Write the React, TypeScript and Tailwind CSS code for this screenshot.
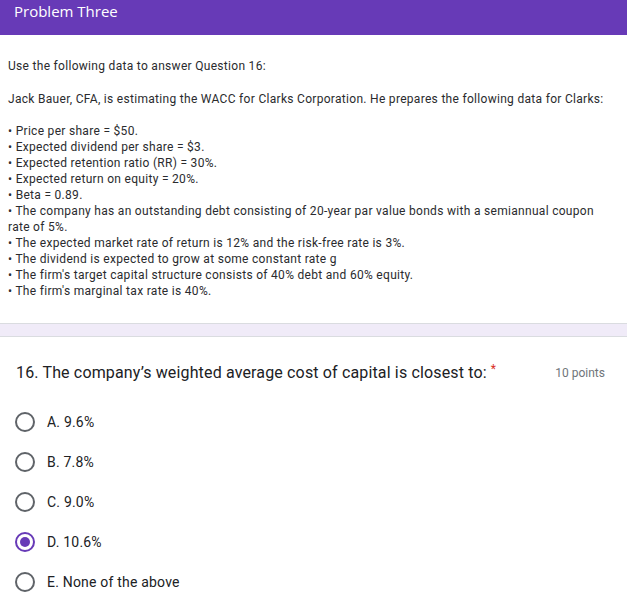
import React from "react";

const bullets = [
  "Price per share = $50.",
  "Expected dividend per share = $3.",
  "Expected retention ratio (RR) = 30%.",
  "Expected return on equity = 20%.",
  "Beta = 0.89.",
  "The company has an outstanding debt consisting of 20-year par value bonds with a semiannual coupon rate of 5%.",
  "The expected market rate of return is 12% and the risk-free rate is 3%.",
  "The dividend is expected to grow at some constant rate g",
  "The firm's target capital structure consists of 40% debt and 60% equity.",
  "The firm's marginal tax rate is 40%.",
];

const options = ["A. 9.6%", "B. 7.8%", "C. 9.0%", "D. 10.6%", "E. None of the above"];

function Radio({ checked }: { checked: boolean }) {
  return checked ? (
    <span className="flex h-[20px] w-[20px] items-center justify-center rounded-full border-2 border-[#673ab7]">
      <span className="h-[10px] w-[10px] rounded-full bg-[#673ab7]" />
    </span>
  ) : (
    <span className="block h-[20px] w-[20px] rounded-full border-2 border-[#5f6368]" />
  );
}

export default function App() {
  return (
    <div className="w-[627px] h-[615px] overflow-hidden bg-white text-[#202124]" style={{ fontFamily: "Roboto, 'Liberation Sans', sans-serif" }}>
      <div className="h-[35px] bg-[#673ab7] pl-[14px] pt-[1px]">
        <div className="text-[15px] leading-[20px] text-white" style={{ fontFamily: "'Open Sans', Roboto, sans-serif" }}>
          Problem Three
        </div>
      </div>
      <div className="pl-[8px] pr-[22px] pt-[23px] pb-[24px] text-[12px] leading-[16px] tracking-[0.3px] text-[#2a2b2e]">
        <p>Use the following data to answer Question 16:</p>
        <p className="mt-[17px]">
          Jack Bauer, CFA, is estimating the WACC for Clarks Corporation. He prepares the following data for Clarks:
        </p>
        <div className="mt-[16px]">
          {bullets.map((b) => (
            <p key={b}>• {b}</p>
          ))}
        </div>
      </div>
      <div className="h-[14px] border-y border-[#dadce0] bg-[#f0ebf8]" />
      <div>
        <div className="flex items-start justify-between pl-[16px] pr-[22px] pt-[25px]">
          <div className="text-[16px] leading-[22px] tracking-[0.15px] text-[#202124]">
            16. The company’s weighted average cost of capital is closest to:
            <span className="ml-[4px] align-top text-[12px] leading-[14px] text-[#d93025]">*</span>
          </div>
          <div className="pt-[3px] text-[12px] leading-[16px] text-[#70757a]">10 points</div>
        </div>
        <div className="mt-[18px] flex flex-col pl-[15px]">
          {options.map((o, i) => (
            <div key={o} className="flex h-[40px] items-center gap-[12px]">
              <Radio checked={i === 3} />
              <span className="text-[14px] leading-[20px] tracking-[0.2px] text-[#202124]">{o}</span>
            </div>
          ))}
        </div>
      </div>
    </div>
  );
}
